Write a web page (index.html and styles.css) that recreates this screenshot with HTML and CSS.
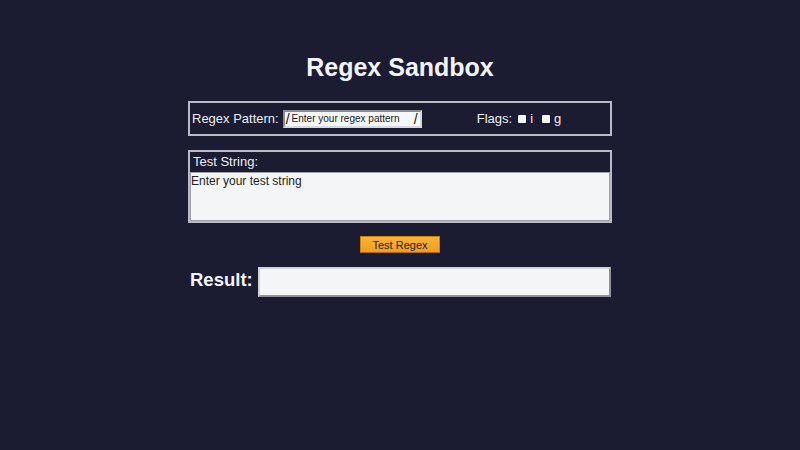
FILE: index.html
```html
<!DOCTYPE html>
<html lang="en">
<head>
<meta charset="utf-8">
<title>Regex Sandbox</title>
<link rel="stylesheet" href="styles.css">
</head>
<body>
<main class="app">
  <h1 class="title">Regex Sandbox</h1>

  <section class="pattern-box">
    <label class="label" for="pattern">Regex Pattern:</label>
    <span class="pattern-field">
      <span class="slash">/</span>
      <input id="pattern" class="pattern-input" type="text" placeholder="Enter your regex pattern">
      <span class="slash">/</span>
    </span>
    <span class="flags">
      <span class="label">Flags:</span>
      <label class="flag"><span class="check"></span>i</label>
      <label class="flag"><span class="check"></span>g</label>
    </span>
  </section>

  <section class="test-box">
    <label class="label test-label" for="test">Test String:</label>
    <textarea id="test" class="test-input" placeholder="Enter your test string"></textarea>
  </section>

  <div class="actions">
    <button class="run-btn" type="button">Test Regex</button>
  </div>

  <section class="result-row">
    <h2 class="result-title">Result:</h2>
    <div class="result-box"></div>
  </section>
</main>
</body>
</html>
```

FILE: styles.css
```css
* {
  box-sizing: border-box;
}

html, body {
  margin: 0;
  background: #1b1c32;
  height: 100%;
}

body {
  font-family: "Liberation Sans", Arial, sans-serif;
  color: #eceef4;
}

.app {
  width: 424px;
  margin: 0 auto;
  padding-top: 52px;
  display: flex;
  flex-direction: column;
}

.title {
  margin: 0 0 19px;
  font-size: 25px;
  line-height: 30px;
  font-weight: bold;
  text-align: center;
  color: #f2f3f7;
}

.label {
  font-size: 13px;
  color: #eceef4;
}

/* pattern row */
.pattern-box {
  height: 35px;
  border: 2px solid #b9bac4;
  display: flex;
  align-items: center;
  padding: 0 2px;
}

.pattern-field {
  margin-left: 4px;
  width: 139px;
  height: 18px;
  display: flex;
  align-items: center;
  background: #f6f7f9;
  border: 2px solid;
  border-color: #8a8b93 #d8d9de #d8d9de #8a8b93;
  color: #111;
  padding: 0 2px 0 1px;
}

.slash {
  font-size: 14px;
  line-height: 14px;
}

.pattern-input {
  flex: 1;
  min-width: 0;
  border: 0;
  outline: 0;
  background: transparent;
  font-family: inherit;
  font-size: 10px;
  padding: 0 0 0 2px;
  color: #111;
}

.pattern-input::placeholder {
  color: #1a1a1a;
  opacity: 1;
}

.flags {
  margin-left: 55px;
  display: flex;
  align-items: center;
}

.flag {
  display: flex;
  align-items: center;
  font-size: 13px;
  margin-left: 6px;
}

.flag + .flag {
  margin-left: 9px;
}

.check {
  width: 8px;
  height: 8px;
  background: #f4f5f8;
  border-radius: 1px;
  margin-right: 4px;
}

/* test string block */
.test-box {
  margin-top: 14px;
  border: 2px solid #b9bac4;
  display: flex;
  flex-direction: column;
}

.test-label {
  height: 20px;
  line-height: 20px;
  padding-left: 3px;
}

.test-input {
  display: block;
  width: 100%;
  height: 49px;
  margin: 0;
  border: 1px solid #9d9ea8;
  background: #f4f5f7;
  resize: none;
  font-family: inherit;
  font-size: 12px;
  padding: 1px 0 0 0;
  outline: 0;
}

.test-input::placeholder {
  color: #222;
  opacity: 1;
}

/* action */
.actions {
  display: flex;
  justify-content: center;
  margin-top: 13px;
}

.run-btn {
  width: 80px;
  height: 17px;
  padding: 0;
  font-family: inherit;
  font-size: 11px;
  color: #1d1d1d;
  background: linear-gradient(#fbb43a, #f09d1c);
  border: 1px solid #c9810f;
  border-bottom-color: #a86a0a;
}

/* result */
.result-row {
  margin-top: 14px;
  display: flex;
  align-items: center;
  padding-left: 2px;
}

.result-title {
  margin: 0 5px 4px 0;
  font-size: 18.5px;
  font-weight: bold;
  color: #f2f3f7;
}

.result-box {
  width: 353px;
  height: 30px;
  background: #f4f5f7;
  border: 2px solid;
  border-color: #d2d3d9 #8f9098 #8f9098 #d2d3d9;
}
```
